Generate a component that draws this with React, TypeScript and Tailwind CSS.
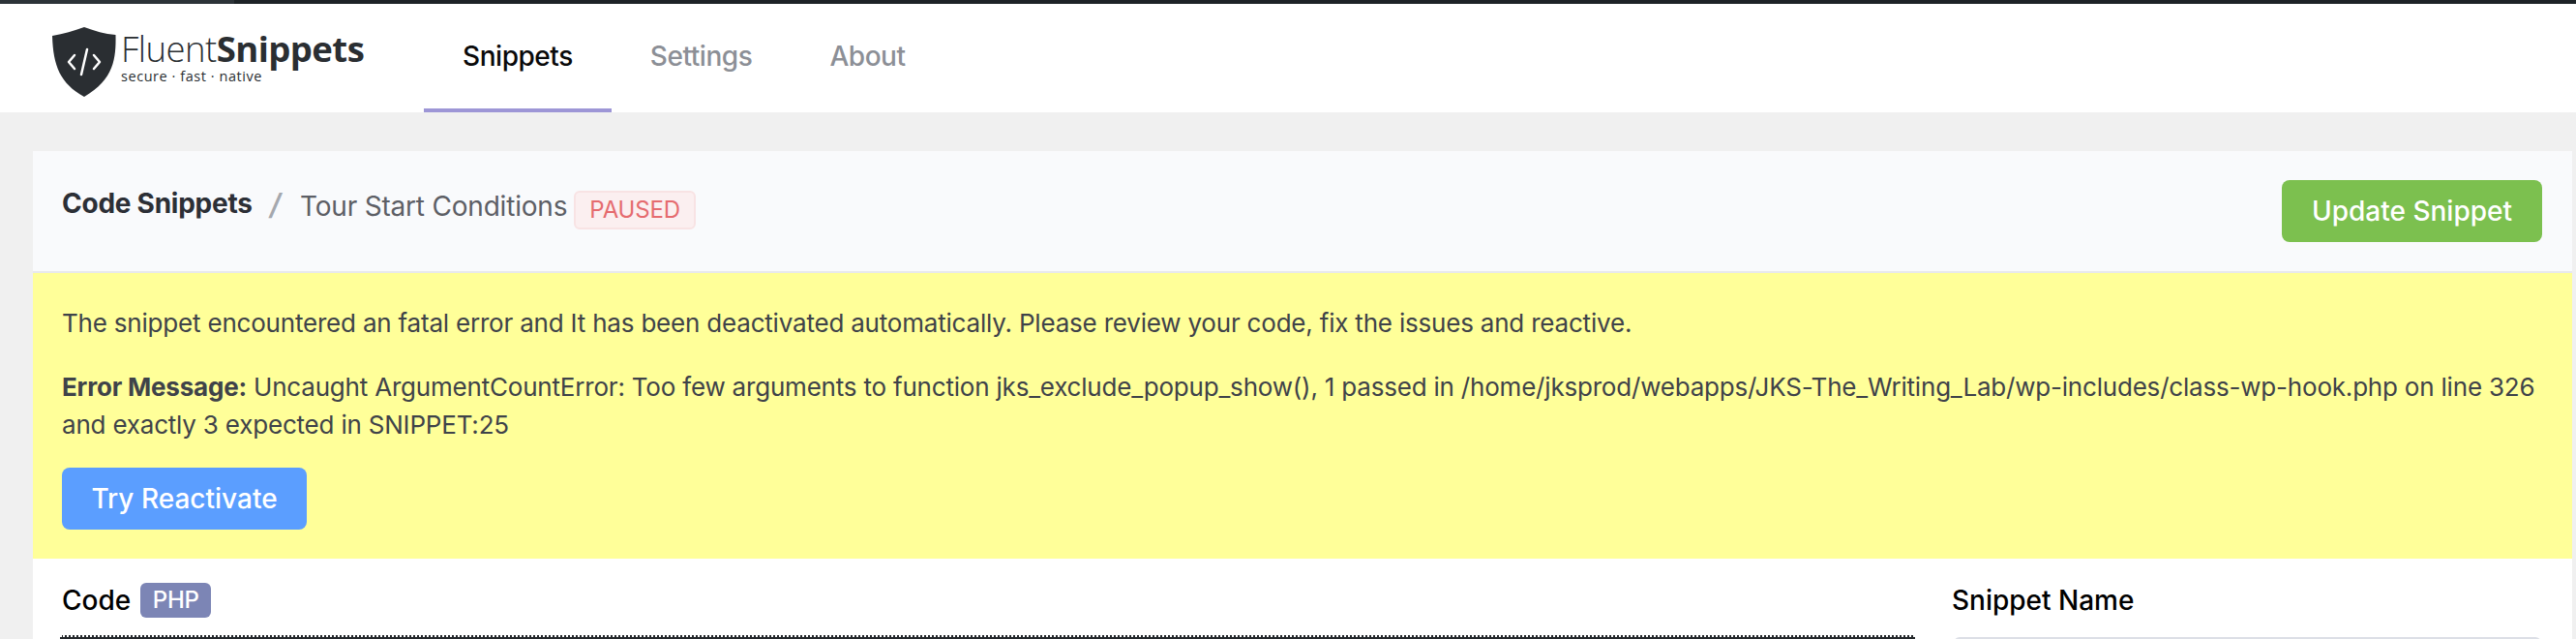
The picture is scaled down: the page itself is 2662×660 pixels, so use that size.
const inter = { fontFamily: "Inter, sans-serif" };

function ShieldLogo() {
  return (
    <svg width="66" height="72" viewBox="0 0 66 72" className="shrink-0">
      <path d="M33 0 C44 4 54 7 65.500 8 C66 32 64 54 33 72 C8 58 1 40 0 9 C12 7 22 4 33 0 Z" fill="#2a2e32" />
      <path
        d="M23 29 L17 36 L23 43 M43 29 L49 36 L43 43 M36 23 L30 49"
        fill="none"
        stroke="#ffffff"
        strokeWidth="2.500"
        strokeLinecap="round"
        strokeLinejoin="round"
      />
    </svg>
  );
}

function Logo() {
  return (
    <div className="flex items-center ml-[54px] w-[384px] mt-[8px]">
      <ShieldLogo />
      <div className="ml-[5px] -mt-[10px] flex flex-col text-[#2a2e32] font-['Open_Sans',sans-serif]">
        <span className="text-[36.5px] leading-[40px] tracking-[-0.55px] font-light whitespace-nowrap">
          Fluent<span className="font-bold">Snippets</span>
        </span>
        <span className="text-[14.500px] leading-[18px] tracking-[0.55px] whitespace-nowrap">secure · fast · native</span>
      </div>
    </div>
  );
}

function NavItem({ label, active }: { label: string; active?: boolean }) {
  return (
    <div
      className={
        active
          ? "h-full flex items-center px-[40px] border-b-4 border-[#9d96d6] text-[#0a0a0a] text-[28px] tracking-[-0.45px] font-medium"
          : "h-full flex items-center px-[40px] border-b-4 border-transparent text-[#8c8f96] text-[28px] tracking-[-0.45px] font-medium"
      }
    >
      {label}
    </div>
  );
}

export default function App() {
  return (
    <div className="h-[660px] w-full overflow-hidden bg-[#f0f0f0]" style={inter}>
      {/* wp admin bar edge */}
      <div className="h-1 flex bg-[#1d2327]">
        <div className="w-[242px] bg-[#2c3338]" />
      </div>

      {/* Nav */}
      <div className="h-[112px] bg-white flex items-center">
        <Logo />
        <NavItem label="Snippets" active />
        <NavItem label="Settings" />
        <NavItem label="About" />
      </div>

      {/* Card */}
      <div className="pt-[40px] pl-[34px] pr-[4px]">
        <div className="bg-white">
          <div className="h-[126px] bg-[#f9fafc] border-b-2 border-[#e8e9ec] pl-[30px] pr-[31px] flex items-center justify-between">
            <div className="flex items-center -mt-[10px]">
              <span className="text-[28px] font-bold tracking-[-0.25px] text-[#2c2f36] -mt-[6px]">Code Snippets</span>
              <span className="text-[30px] font-semibold italic text-[#a5a8ae] ml-[18px] -mt-[4px]">/</span>
              <span className="text-[28px] tracking-[-0.2px] text-[#5d5f66] ml-[20px]">Tour Start Conditions</span>
              <span className="ml-[7px] h-[40px] px-[14px] flex items-center text-[24px] tracking-[-0.15px] text-[#e56b6f] bg-[#fbeff0] border-2 border-[#f8e3e4] rounded-[6px] mt-[8px]">
                PAUSED
              </span>
            </div>
            <button className="w-[269px] h-[64px] rounded-[8px] bg-[#7cc04f] text-white text-[28px] font-medium">
              Update Snippet
            </button>
          </div>

          {/* Error notice */}
          <div className="h-[295px] bg-[#ffff99] px-[30px] pt-[32px] text-[26px] leading-[39px] tracking-[-0.2px] text-[#3f4349]">
            <p>
              The snippet encountered an fatal error and It has been deactivated automatically. Please review your
              code, fix the issues and reactive.
            </p>
            <p className="mt-[27px]">
              <span className="font-bold">Error Message:</span> Uncaught ArgumentCountError: Too few arguments to
              function jks_exclude_popup_show(), 1 passed in /home/jksprod/webapps/JKS-The_Writing_Lab/wp-includes/class-wp-hook.php
              on line 326 and exactly 3 expected in SNIPPET:25
            </p>
            <button className="block mt-[25px] w-[253px] h-[64px] rounded-[8px] bg-[#5b9eff] text-white text-[28px] tracking-normal font-medium">
              Try Reactivate
            </button>
          </div>

          {/* Editor row */}
          <div className="flex pt-[25px] pl-[28px] pr-[32px] gap-[38px]">
            <div className="w-[1917px]">
              <div className="flex items-center h-[36px] pl-[2px]">
                <span className="text-[28px] font-medium text-black">Code</span>
                <span className="ml-[10px] h-[36px] w-[73px] rounded-[6px] bg-[#7c85b5] text-white text-[24px] tracking-[-0.3px] font-medium flex items-center justify-center">
                  PHP
                </span>
              </div>
              <div className="mt-[18px] h-[4px] bg-[#23272b] border-t-2 border-dotted border-white" />
            </div>
            <div className="flex-1">
              <div className="h-[36px] flex items-center text-[28px] font-medium text-black">Snippet Name</div>
              <div className="mt-[20px] ml-[2px] h-[40px] rounded-t-[6px] border-2 border-[#dcdfe6] bg-white" />
            </div>
          </div>
        </div>
      </div>
    </div>
  );
}
